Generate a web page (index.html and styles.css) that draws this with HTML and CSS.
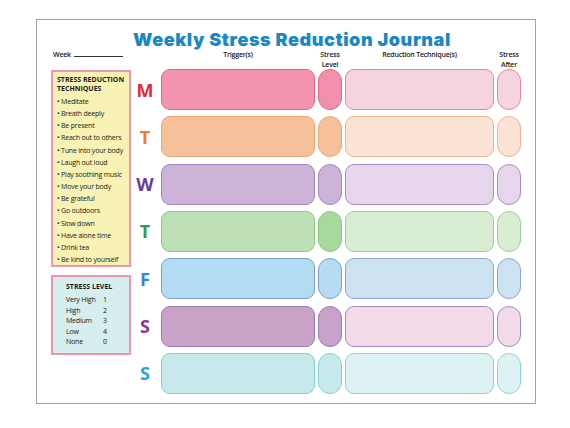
FILE: index.html
```html
<!DOCTYPE html>
<html>
<head>
<meta charset="utf-8">
<link rel="stylesheet" href="styles.css">
</head>
<body>
<div class="frame">
  <h1 class="title">Weekly Stress Reduction Journal</h1>
  <div class="labels">
    <div class="week">Week <span class="line"></span></div>
    <div class="lab">Trigger(s)</div>
    <div class="lab">Stress<br>Level</div>
    <div class="lab">Reduction Technique(s)</div>
    <div class="lab">Stress<br>After</div>
  </div>
  <div class="rows">
    <aside class="side">
      <div class="tech">
        <div class="tech-head">STRESS REDUCTION<br>TECHNIQUES</div>
        <ul class="tech-list">
          <li>• Meditate</li>
          <li>• Breath deeply</li>
          <li>• Be present</li>
          <li>• Reach out to others</li>
          <li>• Tune into your body</li>
          <li>• Laugh out loud</li>
          <li>• Play soothing music</li>
          <li>• Move your body</li>
          <li>• Be grateful</li>
          <li>• Go outdoors</li>
          <li>• Slow down</li>
          <li>• Have alone time</li>
          <li>• Drink tea</li>
          <li>• Be kind to yourself</li>
        </ul>
      </div>
      <div class="level">
        <div class="level-head">STRESS LEVEL</div>
        <div class="level-row"><span>Very High</span><span>1</span></div>
        <div class="level-row"><span>High</span><span>2</span></div>
        <div class="level-row"><span>Medium</span><span>3</span></div>
        <div class="level-row"><span>Low</span><span>4</span></div>
        <div class="level-row"><span>None</span><span>0</span></div>
      </div>
    </aside>

    <div class="day d-m">M</div><div class="box trig d-m"></div><div class="box pill lv d-m"></div><div class="box red d-m"></div><div class="box pill aft d-m"></div>
    <div class="day d-t">T</div><div class="box trig d-t"></div><div class="box pill lv d-t"></div><div class="box red d-t"></div><div class="box pill aft d-t"></div>
    <div class="day d-w">W</div><div class="box trig d-w"></div><div class="box pill lv d-w"></div><div class="box red d-w"></div><div class="box pill aft d-w"></div>
    <div class="day d-th">T</div><div class="box trig d-th"></div><div class="box pill lv d-th"></div><div class="box red d-th"></div><div class="box pill aft d-th"></div>
    <div class="day d-f">F</div><div class="box trig d-f"></div><div class="box pill lv d-f"></div><div class="box red d-f"></div><div class="box pill aft d-f"></div>
    <div class="day d-s">S</div><div class="box trig d-s"></div><div class="box pill lv d-s"></div><div class="box red d-s"></div><div class="box pill aft d-s"></div>
    <div class="day d-su">S</div><div class="box trig d-su"></div><div class="box pill lv d-su"></div><div class="box red d-su"></div><div class="box pill aft d-su"></div>
  </div>
</div>
</body>
</html>
```

FILE: styles.css
```css
html, body {
  margin: 0;
  padding: 0;
  background: #ffffff;
}

body {
  font-family: "Open Sans", "Liberation Sans", sans-serif;
  color: #1a1a1a;
}

.frame {
  box-sizing: border-box;
  margin: 19px 0 0 36px;
  width: 500px;
  height: 385px;
  border: 1px solid #a3a3a3;
  padding: 0 0 0 14px;
}

.title {
  margin: 0;
  padding: 12px 0 0 82px;
  font-family: "Inter", "DejaVu Sans", sans-serif;
  font-weight: 900;
  font-size: 18px;
  line-height: 16px;
  height: 17px;
  letter-spacing: 0.6px;
  color: #1b87c3;
  white-space: nowrap;
}

.labels {
  display: grid;
  grid-template-columns: 80px 24px 154px 24px 149px 24px;
  column-gap: 3px;
  height: 20px;
  padding-top: 1px;
  box-sizing: border-box;
  font-size: 7px;
  font-weight: 600;
  line-height: 9.5px;
  letter-spacing: -0.2px;
}

.week {
  grid-column: 1 / 3;
  padding-left: 2px;
  white-space: nowrap;
}

.week .line {
  display: inline-block;
  width: 49px;
  height: 6px;
  border-bottom: 1px solid #333;
  margin-left: 1px;
}

.lab {
  text-align: center;
  white-space: nowrap;
}

.rows {
  display: grid;
  grid-template-columns: 80px 24px 154px 24px 149px 24px;
  grid-template-rows: repeat(7, 41px);
  column-gap: 3px;
  row-gap: 6.33px;
}

.side {
  grid-column: 1;
  grid-row: 1 / -1;
  align-self: start;
  margin-top: 1px;
  display: flex;
  flex-direction: column;
  gap: 8px;
}

.tech {
  box-sizing: border-box;
  height: 197px;
  background: #f8f3b4;
  border: 2px solid #eb95b5;
  padding: 3px 0 0 4px;
}

.tech-head {
  font-size: 7px;
  font-weight: 700;
  line-height: 9px;
  letter-spacing: 0px;
}

.tech-list {
  list-style: none;
  margin: 3px 0 0 0;
  padding: 0;
  font-size: 7px;
  font-weight: 500;
  line-height: 12.15px;
  letter-spacing: -0.2px;
  white-space: nowrap;
}

.level {
  box-sizing: border-box;
  height: 80px;
  background: #d6eeee;
  border: 2px solid #eb95b5;
  padding: 5px 0 0 13px;
}

.level-head {
  font-size: 7px;
  font-weight: 700;
  line-height: 10px;
  letter-spacing: 0px;
  margin-bottom: 3px;
}

.level-row {
  display: grid;
  grid-template-columns: 37px auto;
  font-size: 7px;
  font-weight: 500;
  line-height: 10.6px;
  letter-spacing: -0.2px;
}

.day {
  grid-column: 2;
  display: flex;
  align-items: center;
  justify-content: center;
  padding-right: 2px;
  font-size: 18px;
  font-weight: 700;
  color: var(--letter);
}

.box {
  box-sizing: border-box;
  border: 1.2px solid var(--b1);
  border-radius: 9px;
}

.pill {
  border-radius: 12px;
}

.trig { background: var(--c1); }
.lv { background: var(--lv); }
.red { background: var(--c2); border-color: var(--b2); }
.aft { background: var(--c2); border-color: var(--b2); }

.d-m  { --letter: #e2283e; --c1: #f494b1; --b1: #e2697f; --lv: #f28fad; --c2: #f6d4df; --b2: #e6889a; }
.d-t  { --letter: #f07a25; --c1: #f6c09b; --b1: #eea676; --lv: #f6c09b; --c2: #fbe4d6; --b2: #f0b38f; }
.d-w  { --letter: #6b3c97; --c1: #cdb3d7; --b1: #a187bf; --lv: #cdb3d7; --c2: #e5d6ec; --b2: #a98cc4; }
.d-th { --letter: #27a04d; --c1: #bde1b4; --b1: #8fc686; --lv: #a8d89b; --c2: #d9edd2; --b2: #9fcf95; }
.d-f  { --letter: #2d8bd0; --c1: #b3dbf2; --b1: #7c9fd0; --lv: #b7dbf1; --c2: #cde2f0; --b2: #8aa7d6; }
.d-s  { --letter: #8b368b; --c1: #c8a3c7; --b1: #977ab5; --lv: #c8a3c7; --c2: #f3dae8; --b2: #a08bc4; }
.d-su { --letter: #27a7d8; --c1: #c8e9ec; --b1: #82cfd2; --lv: #c8e9ec; --c2: #dff2f3; --b2: #8fd4d4; }
```
